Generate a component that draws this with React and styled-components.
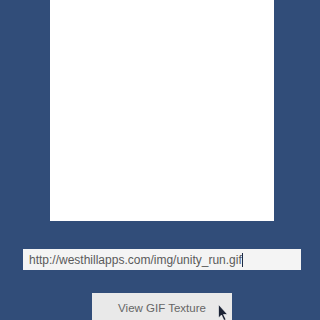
import styled, { createGlobalStyle } from 'styled-components';

const Global = createGlobalStyle`
  html, body {
    margin: 0;
    padding: 0;
    background: #314d79;
    font-family: "Liberation Sans", Arial, sans-serif;
  }
`;

const Page = styled.main`
  width: 320px;
  height: 320px;
  overflow: hidden;
  display: flex;
  flex-direction: column;
  align-items: center;
  position: relative;

  & > * {
    flex-shrink: 0;
  }
`;

const Preview = styled.div`
  width: 224px;
  height: 221px;
  background: #ffffff;
  margin-left: 4px;
`;

const UrlField = styled.div`
  width: 278px;
  height: 21px;
  margin-top: 28px;
  margin-left: 4px;
  box-sizing: border-box;
  padding: 0 6px;
  background: #f4f4f4;
  color: #5a5a5a;
  font-size: 12px;
  display: flex;
  align-items: center;
`;

const Caret = styled.span`
  display: inline-block;
  width: 1px;
  height: 14px;
  background: #1c2a44;
`;

const ViewButton = styled.button`
  width: 140px;
  height: 29px;
  margin-top: 23px;
  margin-left: 4px;
  border: none;
  background: #e9e9e9;
  color: #666666;
  font-family: inherit;
  font-size: 11.5px;
  padding: 0;
`;

const Pointer = styled.svg`
  position: absolute;
  left: 218px;
  top: 304px;
`;

export default function App() {
  return (
    <Page>
      <Global />
      <Preview />
      <UrlField>
        http://westhillapps.com/img/unity_run.gif
        <Caret />
      </UrlField>
      <ViewButton>View GIF Texture</ViewButton>
      <Pointer width="12" height="18" viewBox="0 0 12 18">
        <path d="M0.5 0.5 L0.5 14 L3.5 11 L6 16.5 L8 15.5 L5.5 10.5 L9.5 10.5 Z" fill="#1b2335" stroke="#ffffff" strokeWidth="0.6" />
      </Pointer>
    </Page>
  );
}
